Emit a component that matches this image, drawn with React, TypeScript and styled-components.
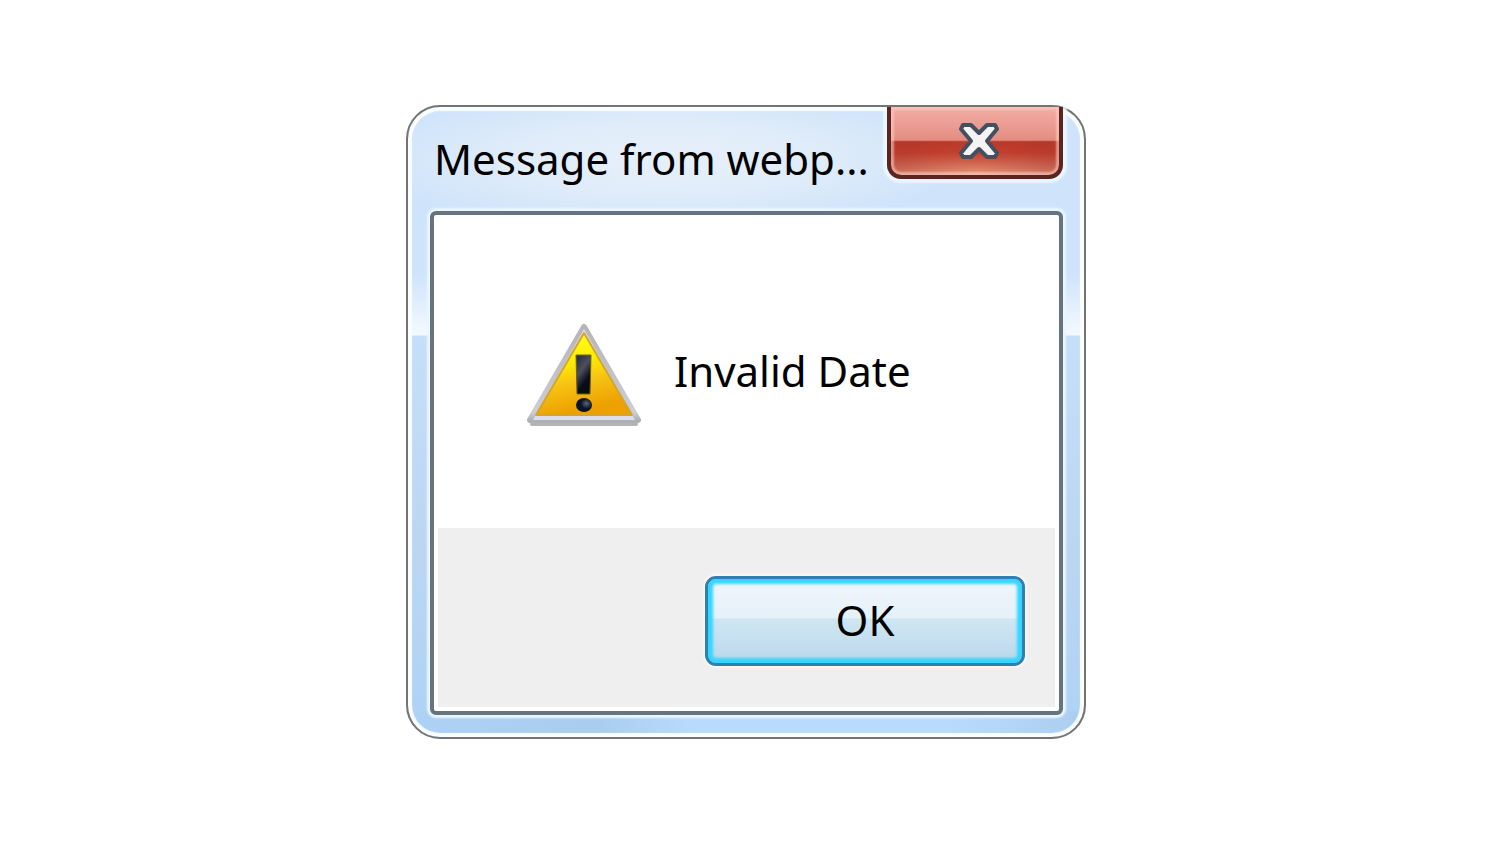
import React from "react";
import styled, { createGlobalStyle } from "styled-components";

const GlobalStyle = createGlobalStyle`
  *, *::before, *::after { box-sizing: border-box; }
  body { margin: 0; background: #fff; font-family: "Noto Sans", "Open Sans", sans-serif; color: #000; }
`;

const Page = styled.main`
  display: flex;
  align-items: center;
  justify-content: center;
  min-height: 100vh;
  padding-right: 8px;
`;

const Dialog = styled.section`
  display: flex;
  flex-direction: column;
  width: 100%;
  max-width: 680px;
  padding: 0 21px 22px 22px;
  border: 2px solid #747474;
  border-radius: 34px;
  box-shadow: inset 0 0 1px 4px #fbfeff;
  background:
    linear-gradient(90deg, #aed2f6 0%, #a9cdee 28%, #b9dbfb 42%, #b9dbfb 80%, #abcdf0 100%) bottom / 100% 26px no-repeat,
    radial-gradient(ellipse 300px 70px at 38% 52px, #e6f0fb 0%, #e0ecf9 50%, rgba(224, 236, 249, 0) 100%) top / 100% 104px no-repeat,
    linear-gradient(#cfe4fb 0, #cfe4fb 168px, #f4f9ff 228px, #c6dff9 229px, #bbd6f2 440px, #aed2f6 100%);
`;

const TitleBar = styled.header`
  display: flex;
  align-items: flex-start;
  justify-content: space-between;
  height: 104px;
  padding-left: 4px;
`;

const Title = styled.h1`
  flex: 1;
  min-width: 0;
  margin: 0;
  padding-top: 24px;
  overflow: hidden;
  font-size: 42px;
  font-weight: 400;
  line-height: 56px;
  white-space: nowrap;
`;

const CloseButton = styled.button`
  display: flex;
  flex: none;
  align-items: center;
  justify-content: center;
  width: 176px;
  height: 72px;
  padding: 0 0 0 8px;
  border: 4px solid #5a2420;
  border-top: 0;
  border-radius: 0 0 14px 14px;
  box-shadow: inset 0 0 2px 3px rgba(255, 205, 195, 0.6), 0 0 2px 4px rgba(240, 250, 255, 0.8);
  clip-path: inset(0 -6px -6px -6px);
  background:
    radial-gradient(ellipse 50% 44px at 50% 100%, rgba(160, 40, 40, 0), rgba(150, 40, 40, 0.35)) bottom / 100% 34px no-repeat,
    linear-gradient(#f3aea6 0, #e48d82 33px, #c83f2a 35px, #cc4630 46px, #e49a7c 100%);
`;

const Client = styled.div`
  border: 4px solid #66747f;
  border-radius: 6px;
  box-shadow: 0 0 2px 3px #eaf6ff;
  background: #fff;
`;

const Message = styled.div`
  display: flex;
  align-items: center;
  gap: 32px;
  height: 313px;
  padding: 8px 32px 0 92px;
`;

const MessageText = styled.p`
  margin: 0;
  padding-bottom: 10px;
  font-size: 42px;
  line-height: 56px;
`;

const Footer = styled.footer`
  display: flex;
  justify-content: flex-end;
  margin: 0 4px 4px;
  padding: 48px 30px 41px;
  background: #efefef;
`;

const OkButton = styled.button`
  width: 320px;
  height: 90px;
  padding: 0 0 2px;
  border: 3px solid #2f7fb5;
  border-radius: 11px;
  box-shadow: inset 0 0 3px 5px #35d6fd, 0 0 2px 2px #faf6f2;
  background: linear-gradient(#f1f5fb 0, #e6f1f9 46%, #cfe6f3 48%, #b9d8ea 100%);
  color: #000;
  font: 400 42px/56px "Noto Sans", "Open Sans", sans-serif;
`;

function CloseIcon() {
  return (
    <svg width="44" height="40" viewBox="0 0 44 40" aria-hidden="true">
      <path
        d="M6 4h8l8 8 8-8h8l2 4-10 12 10 12-2 4h-8l-8-8-8 8H6l-2-4 10-12L4 8z"
        fill="#f4f4f4"
        stroke="#444f60"
        strokeWidth="4"
        strokeLinejoin="round"
      />
    </svg>
  );
}

function WarningIcon() {
  return (
    <svg width="116" height="108" viewBox="0 0 116 108" role="img" aria-label="Warning">
      <defs>
        <linearGradient id="face" x1="0" y1="0" x2="0.25" y2="1">
          <stop offset="0" stopColor="#ffff2e" />
          <stop offset="0.4" stopColor="#fff000" />
          <stop offset="0.65" stopColor="#f7c414" />
          <stop offset="1" stopColor="#eda000" />
        </linearGradient>
        <linearGradient id="rim" x1="0" y1="0" x2="0" y2="1">
          <stop offset="0" stopColor="#b5b5b9" />
          <stop offset="0.92" stopColor="#cccdd6" />
          <stop offset="1" stopColor="#b0b0b4" />
        </linearGradient>
        <linearGradient id="bar" x1="0" y1="0" x2="0.5" y2="1">
          <stop offset="0" stopColor="#25263a" />
          <stop offset="0.45" stopColor="#4d4f5f" />
          <stop offset="0.8" stopColor="#080b18" />
        </linearGradient>
        <radialGradient id="dot" cx="0.65" cy="0.4" r="0.6">
          <stop offset="0" stopColor="#53677a" />
          <stop offset="0.6" stopColor="#0b1424" />
        </radialGradient>
      </defs>
      <path d="M6 102L110 102" stroke="#b4b4b4" strokeWidth="4" strokeLinecap="round" />
      <path d="M58 5L112 98H4Z" fill="url(#rim)" stroke="url(#rim)" strokeWidth="6" strokeLinejoin="round" />
      <path d="M58 7L109 98H7Z" fill="#dcdeea" />
      <path d="M58 11L106 93H10Z" fill="url(#face)" stroke="#d2a62c" strokeWidth="2" strokeLinejoin="round" />
      <path d="M50 33H65L64 72H51Z" fill="url(#bar)" stroke="#6e6415" strokeWidth="1" strokeLinejoin="round" />
      <ellipse cx="58" cy="83" rx="8" ry="7" fill="url(#dot)" />
    </svg>
  );
}

export default function App() {
  return (
    <>
      <GlobalStyle />
      <Page>
        <Dialog role="alertdialog" aria-labelledby="dialog-title" aria-describedby="dialog-message">
          <TitleBar>
            <Title id="dialog-title">Message from webp...</Title>
            <CloseButton type="button" aria-label="Close">
              <CloseIcon />
            </CloseButton>
          </TitleBar>
          <Client>
            <Message>
              <WarningIcon />
              <MessageText id="dialog-message">Invalid Date</MessageText>
            </Message>
            <Footer>
              <OkButton type="button">OK</OkButton>
            </Footer>
          </Client>
        </Dialog>
      </Page>
    </>
  );
}
